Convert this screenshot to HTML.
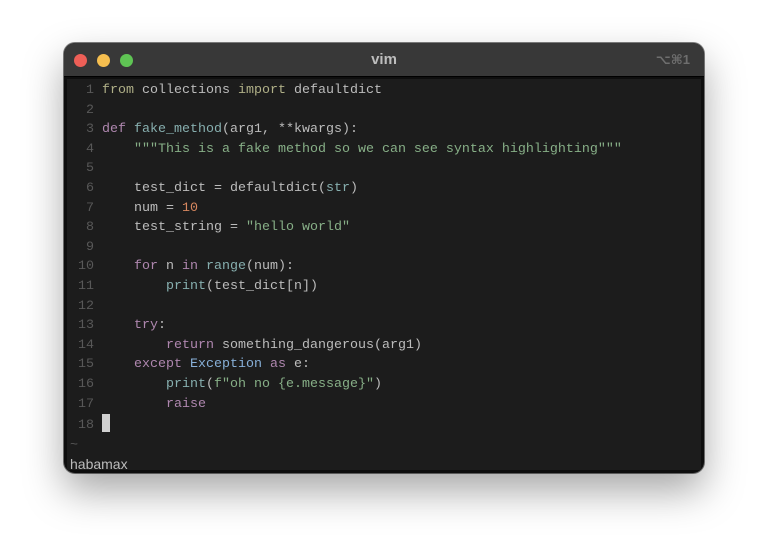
<!DOCTYPE html>
<html><head><meta charset="utf-8"><style>
html,body{margin:0;padding:0;background:#fff;width:768px;height:558px;overflow:hidden}
.win{position:absolute;left:64px;top:43px;width:640px;height:430px;border-radius:11px;background:#0e0e0e;
box-shadow:0 18px 40px rgba(0,0,0,.35),0 0 0 1px rgba(0,0,0,.5);overflow:hidden}
.tb{position:absolute;left:0;top:0;right:0;height:33px;background:#383838;border-bottom:1px solid #000}
.dot{position:absolute;top:11px;width:13px;height:13px;border-radius:50%}
.t{position:absolute;left:0;right:0;top:8px;text-align:center;font:bold 15px "Liberation Sans",sans-serif;color:#bdbdbd}
.sc{position:absolute;right:14px;top:9px;font:bold 13px "Liberation Sans","DejaVu Sans",sans-serif;color:#6e6e6e}
.ed{position:absolute;left:3px;right:3px;top:36px;bottom:3px;background:#1c1c1c}
pre{margin:0;position:absolute;left:3px;top:2px;font:13.33px/19.6px "Liberation Mono",monospace;color:#bcbcbc}
.n{color:#585858}.k{color:#afaf87}.d{color:#af87af}.f{color:#87afaf}.s{color:#87af87}.o{color:#d7875f}.e{color:#87afd7}
.cur{display:inline-block;width:8px;height:18px;background:#d0d0d0;vertical-align:-4px}
</style></head><body>
<div class="win">
<div class="tb">
<div class="dot" style="left:10px;background:#ee5f57"></div>
<div class="dot" style="left:33px;background:#f5be4f"></div>
<div class="dot" style="left:56px;background:#5fc454"></div>
<div class="t">vim</div><div class="sc">⌥⌘1</div>
</div>
<div class="ed"><pre><span class="n">  1 </span><span class="k">from</span> collections <span class="k">import</span> defaultdict
<span class="n">  2 </span>
<span class="n">  3 </span><span class="d">def</span> <span class="f">fake_method</span>(arg1, **kwargs):
<span class="n">  4 </span>    <span class="s">"""This is a fake method so we can see syntax highlighting"""</span>
<span class="n">  5 </span>
<span class="n">  6 </span>    test_dict = defaultdict(<span class="f">str</span>)
<span class="n">  7 </span>    num = <span class="o">10</span>
<span class="n">  8 </span>    test_string = <span class="s">"hello world"</span>
<span class="n">  9 </span>
<span class="n"> 10 </span>    <span class="d">for</span> n <span class="d">in</span> <span class="f">range</span>(num):
<span class="n"> 11 </span>        <span class="f">print</span>(test_dict[n])
<span class="n"> 12 </span>
<span class="n"> 13 </span>    <span class="d">try</span>:
<span class="n"> 14 </span>        <span class="d">return</span> something_dangerous(arg1)
<span class="n"> 15 </span>    <span class="d">except</span> <span class="e">Exception</span> <span class="d">as</span> e:
<span class="n"> 16 </span>        <span class="f">print</span>(<span class="s">f"oh no {e.message}"</span>)
<span class="n"> 17 </span>        <span class="d">raise</span>
<span class="n"> 18 </span><span class="cur"></span>
<span class="n">~</span>
<span style="font-family:'Liberation Sans',sans-serif;font-size:14px">habamax</span></pre></div>
</div>
</body></html>
